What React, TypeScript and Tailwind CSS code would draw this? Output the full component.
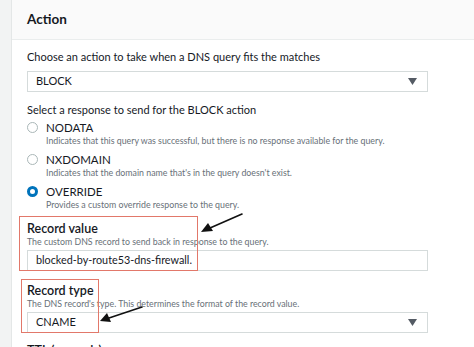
import React from "react";

const font = { fontFamily: 'Lato, "Open Sans", sans-serif' };

function Radio({ checked, label, desc }: { checked?: boolean; label: string; desc: string }) {
  return (
    <div className="flex items-start gap-[8px]">
      <div className="mt-[1px] flex h-[11px] w-[11px] shrink-0 items-center justify-center">
        {checked ? (
          <div className="h-[11px] w-[11px] rounded-full border-[3px] border-[#0073bb] bg-white" />
        ) : (
          <div className="h-[11px] w-[11px] rounded-full border border-[#aab7b8] bg-white" />
        )}
      </div>
      <div className="flex flex-col">
        <div className="text-[11.5px] leading-[14px] text-[#16191f]">{label}</div>
        <div className="text-[8.8px] leading-[12px] text-[#687078]">{desc}</div>
      </div>
    </div>
  );
}

function Caret() {
  return (
    <svg width="9" height="7" viewBox="0 0 9 7">
      <path d="M0 0 H9 L4.5 7 Z" fill="#545b64" />
    </svg>
  );
}

export default function App() {
  return (
    <div className="relative h-[347px] w-[474px] overflow-hidden bg-[#f2f3f3]" style={font}>
      <div className="ml-[11px] h-full border-l border-[#e4e7e7] bg-white">
        <div className="flex h-[40px] items-center border-b border-[#eaeded] bg-[#fafafa] pl-[15px]">
          <span className="text-[13.5px] font-bold text-[#16191f]">Action</span>
        </div>
        <div className="flex w-[416px] flex-col pl-[15px] pt-[9px]">
          <div className="text-[11px] leading-[16px] text-[#16191f]">
            Choose an action to take when a DNS query fits the matches
          </div>
          <div className="mt-[6px] flex h-[21px] items-center justify-between border border-[#d5dbdb] bg-white pl-[8px] pr-[10px]">
            <span className="text-[11px] text-[#16191f]">BLOCK</span>
            <Caret />
          </div>
          <div className="mt-[10px] text-[11px] leading-[16px] text-[#16191f]">
            Select a response to send for the BLOCK action
          </div>
          <div className="mt-[3px] flex flex-col gap-[6px]">
            <Radio
              label="NODATA"
              desc="Indicates that this query was successful, but there is no response available for the query."
            />
            <Radio label="NXDOMAIN" desc="Indicates that the domain name that's in the query doesn't exist." />
            <Radio checked label="OVERRIDE" desc="Provides a custom override response to the query." />
          </div>
          <div className="mt-[11px] text-[12.5px] font-semibold leading-[14px] text-[#16191f]">Record value</div>
          <div className="text-[8.8px] leading-[12px] text-[#687078]">
            The custom DNS record to send back in response to the query.
          </div>
          <div className="mt-[2px] flex h-[21px] items-center border border-[#d5dbdb] bg-white pl-[8px]">
            <span className="text-[10.8px] text-[#16191f]">blocked-by-route53-dns-firewall.</span>
          </div>
          <div className="mt-[13px] text-[12.5px] font-semibold leading-[14px] text-[#16191f]">Record type</div>
          <div className="text-[8.8px] leading-[12px] text-[#687078]">
            The DNS record's type. This determines the format of the record value.
          </div>
          <div className="mt-[2px] flex h-[21px] items-center justify-between border border-[#d5dbdb] bg-white pl-[8px] pr-[10px]">
            <span className="text-[11px] text-[#16191f]">CNAME</span>
            <Caret />
          </div>
          <div className="mt-[11px] text-[12.5px] font-semibold leading-[14px] text-[#16191f]">TTL (seconds)</div>
        </div>
      </div>

      {/* annotation boxes */}
      <div className="absolute left-[19px] top-[216px] h-[55px] w-[179px] border border-[#e2786a]" />
      <div className="absolute left-[21px] top-[279px] h-[54px] w-[78px] border border-[#e2786a]" />

      {/* arrows */}
      <svg className="absolute left-0 top-0" width="474" height="347" viewBox="0 0 474 347">
        <path d="M242 214 L210 228" stroke="#111" strokeWidth="1.6" strokeLinecap="round" fill="none" />
        <path d="M201 232 L208 223 L213 231 Z" fill="#111" />
        <path d="M142 307 L109 318" stroke="#111" strokeWidth="1.6" strokeLinecap="round" fill="none" />
        <path d="M100 321 L107 313 L111 322 Z" fill="#111" />
      </svg>
    </div>
  );
}
